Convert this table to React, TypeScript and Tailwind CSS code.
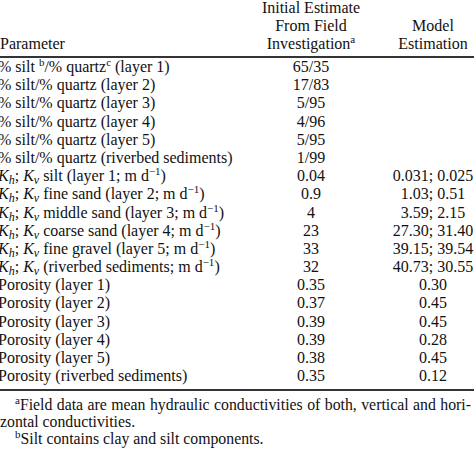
import React from "react";

const Sup = ({ children }: { children: React.ReactNode }) => (
  <sup className="text-[11px] align-baseline relative top-[-6px]">{children}</sup>
);

const K = () => (
  <>
    <i>K</i>
    <sub className="text-[12px] italic relative top-[3px] align-baseline">h</sub>; <i>K</i>
    <sub className="text-[12px] italic relative top-[3px] align-baseline">v</sub>
  </>
);

const Md = () => (
  <>
    m d<Sup>−1</Sup>
  </>
);

type Row = { p: React.ReactNode; a: string; b: string };

const rows: Row[] = [
  {
    p: (
      <>
        % silt <Sup>b</Sup>/% quartz<Sup>c</Sup> (layer 1)
      </>
    ),
    a: "65/35",
    b: "",
  },
  { p: "% silt/% quartz (layer 2)", a: "17/83", b: "" },
  { p: "% silt/% quartz (layer 3)", a: "5/95", b: "" },
  { p: "% silt/% quartz (layer 4)", a: "4/96", b: "" },
  { p: "% silt/% quartz (layer 5)", a: "5/95", b: "" },
  { p: "% silt/% quartz (riverbed sediments)", a: "1/99", b: "" },
  { p: <><K /> silt (layer 1; <Md />)</>, a: "0.04", b: "0.031; 0.025" },
  { p: <><K /> fine sand (layer 2; <Md />)</>, a: "0.9", b: "1.03; 0.51" },
  { p: <><K /> middle sand (layer 3; <Md />)</>, a: "4", b: "3.59; 2.15" },
  { p: <><K /> coarse sand (layer 4; <Md />)</>, a: "23", b: "27.30; 31.40" },
  { p: <><K /> fine gravel (layer 5; <Md />)</>, a: "33", b: "39.15; 39.54" },
  { p: <><K /> (riverbed sediments; <Md />)</>, a: "32", b: "40.73; 30.55" },
  { p: "Porosity (layer 1)", a: "0.35", b: "0.30" },
  { p: "Porosity (layer 2)", a: "0.37", b: "0.45" },
  { p: "Porosity (layer 3)", a: "0.39", b: "0.45" },
  { p: "Porosity (layer 4)", a: "0.39", b: "0.28" },
  { p: "Porosity (layer 5)", a: "0.38", b: "0.45" },
  { p: "Porosity (riverbed sediments)", a: "0.35", b: "0.12" },
];

export default function App() {
  return (
    <div
      className="w-[474px] h-[449px] overflow-hidden bg-white text-[#111] text-[16px]"
      style={{ fontFamily: '"Liberation Serif", "Times New Roman", serif' }}
    >
      {/* header */}
      <div className="flex ml-[-2px] w-[500px] mt-[-1px] leading-[18px] pb-[3px]">
        <div className="w-[251px] flex items-end pl-[2px]">Parameter</div>
        <div className="w-[124px] text-center whitespace-nowrap">
          <div>Initial Estimate</div>
          <div>From Field</div>
          <div>
            Investigation<Sup>a</Sup>
          </div>
        </div>
        <div className="w-[120px] text-center flex flex-col justify-end">
          <div>Model</div>
          <div>Estimation</div>
        </div>
      </div>
      <div className="h-[2px] bg-[#333]" />
      {/* body */}
      <div className="pb-[4px]">
        {rows.map((r, i) => (
          <div key={i} className="flex ml-[-2px] w-[500px] h-[18.2px] leading-[18.2px] whitespace-nowrap">
            <div className="w-[251px]">{r.p}</div>
            <div className="w-[124px] text-center">{r.a}</div>
            <div className="w-[120px] text-center">{r.b}</div>
          </div>
        ))}
      </div>
      <div className="h-[2px] bg-[#333]" />
      {/* footnotes */}
      <div className="pt-[5px] leading-[17px] text-[15.8px]">
        <div className="pl-[15px] pr-[3px] text-justify [text-align-last:justify] whitespace-nowrap">
          <Sup>a</Sup>Field data are mean hydraulic conductivities of both, vertical and hori-
        </div>
        <div>zontal conductivities.</div>
        <div className="pl-[15px]">
          <Sup>b</Sup>Silt contains clay and silt components.
        </div>
      </div>
    </div>
  );
}
